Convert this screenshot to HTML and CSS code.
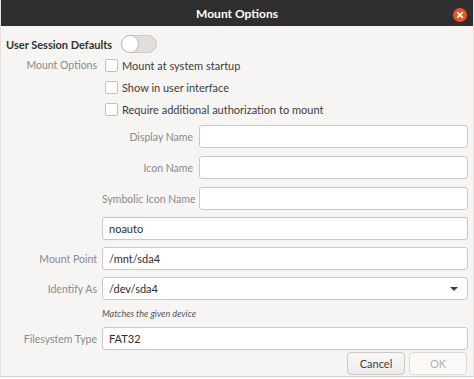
FILE: index.html
```html
<!DOCTYPE html>
<html lang="en">
<head>
    <meta charset="UTF-8">
    <meta name="viewport" content="width=device-width, initial-scale=1.0">
    <title>Mount Options</title>
    <link rel="stylesheet" href="styles.css">
</head>
<body>

    <div class="window">
        <div class="titlebar">
            <span></span>
            <span class="title">Mount Options</span>
            <span class="close">
                <svg width="14" height="14" viewBox="0 0 14 14">
                    <circle cx="7" cy="7" r="7" fill="#e95420"/>
                    <path d="M4.6 4.6 L9.4 9.4 M9.4 4.6 L4.6 9.4" stroke="#fff" stroke-width="1.5" stroke-linecap="round"/>
                </svg>
            </span>
        </div>

        <div class="content">
            <div class="defaults">
                <span class="defaults-label">User Session Defaults</span>
                <span class="switch"><span class="knob"></span></span>
            </div>

            <div class="form">
                <div class="label top">Mount Options</div>
                <div class="checks">
                    <label class="check"><span class="box"></span>Mount at system startup</label>
                    <label class="check"><span class="box"></span>Show in user interface</label>
                    <label class="check"><span class="box"></span>Require additional authorization to mount</label>
                </div>

                <div></div>
                <div class="names">
                    <div class="label">Display Name</div>
                    <div class="entry"></div>
                    <div class="label">Icon Name</div>
                    <div class="entry"></div>
                    <div class="label">Symbolic Icon Name</div>
                    <div class="entry"></div>
                </div>

                <div></div>
                <div class="entry">noauto</div>

                <div class="label">Mount Point</div>
                <div class="entry">/mnt/sda4</div>

                <div class="label">Identify As</div>
                <div class="entry combo">
                    <span>/dev/sda4</span>
                    <svg width="8" height="4" viewBox="0 0 8 4"><path d="M0 0 L8 0 L4 4 Z" fill="#3d3d3d"/></svg>
                </div>

                <div></div>
                <div class="hint">Matches the given device</div>

                <div class="label">Filesystem Type</div>
                <div class="entry">FAT32</div>
            </div>

            <div class="actions">
                <button class="btn">Cancel</button>
                <button class="btn disabled">OK</button>
            </div>
        </div>
    </div>

</body>
</html>
```

FILE: styles.css
```css
body {
    margin: 0;
    background: #ffffff;
    font-family: Lato, "Noto Sans", sans-serif;
    color: #3d3d3d;
}

.window {
    width: 472px;
    height: 376px;
    background: #f6f5f4;
    border-bottom: 1px solid #d3cfcb;
    border-left: 1px solid #e4e1de;
    border-right: 1px solid #e4e1de;
}

.titlebar {
    height: 26px;
    background: #2f2f2f;
    display: grid;
    grid-template-columns: 1fr auto 1fr;
    align-items: center;
}

.title {
    color: #ffffff;
    font-weight: bold;
    font-size: 12px;
}

.close {
    justify-self: end;
    margin-right: 6px;
    height: 14px;
}

.content {
    padding: 9px 5px 0 5px;
}

.defaults {
    display: flex;
    align-items: center;
    gap: 9px;
    height: 18px;
    margin-bottom: 3px;
}

.defaults-label {
    font-weight: bold;
    font-size: 11px;
    color: #333;
}

.switch {
    width: 34px;
    height: 16px;
    border: 1px solid #cdc7c2;
    border-radius: 9px;
    background: #e1dedb;
    display: flex;
    align-items: center;
}

.knob {
    width: 16px;
    height: 16px;
    border-radius: 50%;
    background: #ffffff;
    box-shadow: 0 0 0 1px #c0bbb6;
}

.form {
    display: grid;
    grid-template-columns: 91px 1fr;
    column-gap: 5px;
    row-gap: 7px;
    align-items: center;
}

.label {
    text-align: right;
    color: #8a8a8a;
    font-size: 10.5px;
    white-space: nowrap;
}

.label.top {
    align-self: start;
    line-height: 18px;
}

.checks {
    display: flex;
    flex-direction: column;
    gap: 4px;
}

.check {
    display: flex;
    align-items: center;
    gap: 4px;
    height: 18px;
    font-size: 11px;
    color: #3d3d3d;
}

.box {
    width: 11px;
    height: 11px;
    margin-left: 3px;
    background: #ffffff;
    border: 1px solid #c6c0bb;
    border-radius: 2px;
}

.names {
    display: grid;
    grid-template-columns: 91px 1fr;
    column-gap: 6px;
    row-gap: 8px;
    align-items: center;
}

.entry {
    height: 21px;
    background: #ffffff;
    border: 1px solid #cdc7c2;
    border-radius: 3px;
    padding: 0 6px;
    display: flex;
    align-items: center;
    font-size: 11px;
    color: #2e2e2e;
}

.combo {
    justify-content: space-between;
    padding-right: 9px;
}

.hint {
    font-size: 9px;
    font-style: italic;
    color: #555;
    line-height: 13px;
}

.actions {
    display: flex;
    justify-content: flex-end;
    gap: 4px;
    margin-top: 2px;
    padding-right: 1px;
}

.btn {
    width: 58px;
    height: 23px;
    border: 1px solid #cdc7c2;
    border-radius: 4px;
    background: linear-gradient(#f8f7f6, #efedeb);
    font-family: Lato, "Noto Sans", sans-serif;
    font-size: 11px;
    color: #3d3d3d;
}

.btn.disabled {
    background: #faf9f8;
    color: #b5b1ad;
    border-color: #ddd9d5;
}
```
